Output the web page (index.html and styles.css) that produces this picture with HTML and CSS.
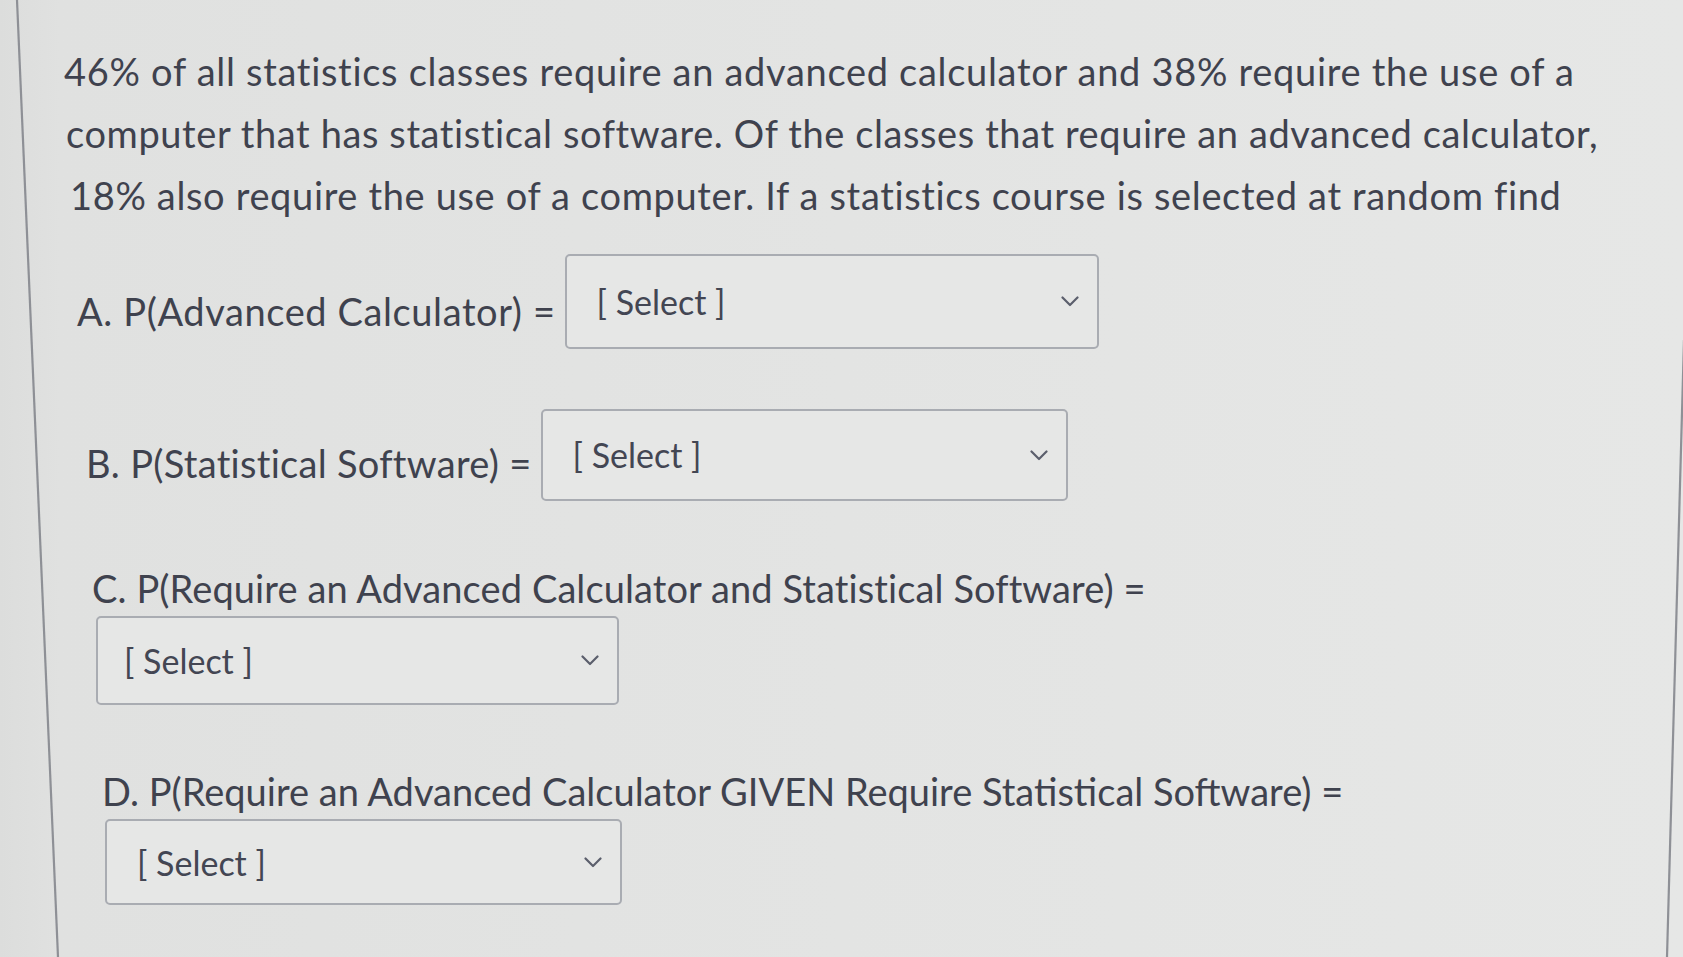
FILE: index.html
```html
<!DOCTYPE html>
<html lang="en">
<head>
<meta charset="utf-8">
<title>Statistics question</title>
<link rel="stylesheet" href="styles.css">
</head>
<body>
<svg class="frame-lines" width="1683" height="957" viewBox="0 0 1683 957" aria-hidden="true">
  <line x1="17" y1="0" x2="58" y2="957" stroke="#8e9096" stroke-width="2.2"/>
  <line x1="1684" y1="340" x2="1667" y2="957" stroke="#8e9096" stroke-width="2.2"/>
</svg>
<main class="page">
  <p class="question">
    <span class="qline l1">46% of all statistics classes require an advanced calculator and 38% require the use of a</span>
    <span class="qline l2">computer that has statistical software. Of the classes that require an advanced calculator,</span>
    <span class="qline l3">18% also require the use of a computer. If a statistics course is selected at random find</span>
  </p>

  <div class="item item-a">
    <span class="label">A. P(Advanced Calculator) =</span>
    <div class="select sel-a">
      <span class="select-text">[ Select ]</span>
      <svg class="chev" width="18" height="11" viewBox="0 0 18 11"><path d="M1.5 1.5 L9 9 L16.5 1.5" fill="none" stroke="#5b5f6c" stroke-width="2.2" stroke-linecap="round" stroke-linejoin="round"/></svg>
    </div>
  </div>

  <div class="item item-b">
    <span class="label">B. P(Statistical Software) =</span>
    <div class="select sel-b">
      <span class="select-text">[ Select ]</span>
      <svg class="chev" width="18" height="11" viewBox="0 0 18 11"><path d="M1.5 1.5 L9 9 L16.5 1.5" fill="none" stroke="#5b5f6c" stroke-width="2.2" stroke-linecap="round" stroke-linejoin="round"/></svg>
    </div>
  </div>

  <div class="item-stack item-c">
    <span class="label">C. P(Require an Advanced Calculator and Statistical Software) =</span>
    <div class="select sel-c">
      <span class="select-text">[ Select ]</span>
      <svg class="chev" width="18" height="11" viewBox="0 0 18 11"><path d="M1.5 1.5 L9 9 L16.5 1.5" fill="none" stroke="#5b5f6c" stroke-width="2.2" stroke-linecap="round" stroke-linejoin="round"/></svg>
    </div>
  </div>

  <div class="item-stack item-d">
    <span class="label">D. P(Require an Advanced Calculator GIVEN Require Statistical Software) =</span>
    <div class="select sel-d">
      <span class="select-text">[ Select ]</span>
      <svg class="chev" width="18" height="11" viewBox="0 0 18 11"><path d="M1.5 1.5 L9 9 L16.5 1.5" fill="none" stroke="#5b5f6c" stroke-width="2.2" stroke-linecap="round" stroke-linejoin="round"/></svg>
    </div>
  </div>
</main>
</body>
</html>
```

FILE: styles.css
```css
html, body {
  margin: 0;
  padding: 0;
}

body {
  width: 1683px;
  height: 957px;
  overflow: hidden;
  position: relative;
  background: linear-gradient(to right, #dcdddc 0px, #e0e1e0 60px, #e3e4e3 50%, #e6e7e6 100%);
  font-family: Lato, "Open Sans", "Liberation Sans", sans-serif;
  color: #3f424e;
}

.frame-lines {
  position: absolute;
  left: 0;
  top: 0;
  z-index: 0;
}

.page {
  position: relative;
  z-index: 1;
  padding-top: 40px;
}

.question {
  margin: 0;
  font-size: 38px;
  line-height: 62px;
  letter-spacing: 0.7px;
}

.qline {
  display: block;
  white-space: nowrap;
}

.l1 { margin-left: 64px; }
.l2 { margin-left: 66px; letter-spacing: 0.6px; }
.l3 { margin-left: 70px; letter-spacing: 0.65px; }

.label {
  font-size: 38px;
  white-space: nowrap;
}

.item {
  display: flex;
  align-items: center;
  gap: 9px;
}

.item-a {
  margin-top: 28px;
  margin-left: 77px;
}

.item-a .label { padding-top: 18px; letter-spacing: 0.6px; }

.item-b {
  margin-top: 60px;
  margin-left: 86px;
}

.item-b .label { padding-top: 16px; letter-spacing: 0.3px; }

.item-stack {
  display: flex;
  flex-direction: column;
  align-items: flex-start;
}

.item-c {
  margin-top: 64px;
  margin-left: 92px;
}

.item-c .label { line-height: 46px; letter-spacing: 0.1px; }
.item-c .select { margin-left: 4px; margin-top: 5px; }

.item-d {
  margin-top: 63px;
  margin-left: 102px;
}

.item-d .label { line-height: 46px; }
.item-d .select { margin-left: 3px; margin-top: 5px; }

.select {
  box-sizing: border-box;
  display: flex;
  align-items: center;
  justify-content: space-between;
  border: 2px solid #a9acb2;
  border-radius: 5px;
  background: #e6e7e6;
  padding-left: 30px;
  padding-right: 18px;
}

.select-text {
  font-size: 34px;
  color: #434653;
}

.sel-a { width: 534px; height: 95px; }
.sel-b { width: 527px; height: 92px; }
.sel-b .select-text { margin-top: -2px; }
.sel-c { width: 523px; height: 89px; padding-left: 26px; }
.sel-d { width: 517px; height: 86px; }

.chev {
  display: block;
  flex: none;
}
```
